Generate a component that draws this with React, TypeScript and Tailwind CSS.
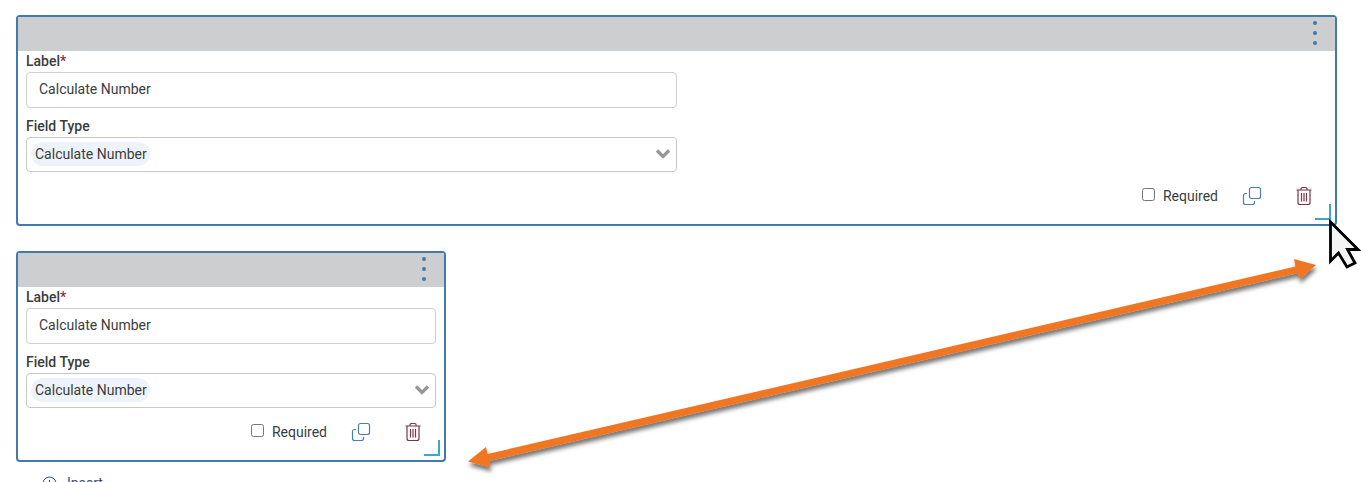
import { useId, useState } from 'react'

function CopyIcon() {
  return (
    <svg width="20" height="20" viewBox="0 0 20 20" fill="none" stroke="#4a80ad" strokeWidth="1.2" aria-hidden="true">
      <rect x="7.5" y="1.5" width="11" height="11" rx="2" />
      <path d="M5 7.500H3.500a2 2 0 0 0-2 2v7a2 2 0 0 0 2 2h7a2 2 0 0 0 2-2V15" />
    </svg>
  )
}

function TrashIcon() {
  return (
    <svg width="18" height="20" viewBox="0 0 18 20" fill="none" stroke="#7a3548" strokeWidth="1.2" aria-hidden="true">
      <path d="M1.500 4h15M6 4V2.800A1.300 1.300 0 0 1 7.300 1.500h3.400A1.300 1.300 0 0 1 12 2.800V4" />
      <path d="M3 4v12.500a2 2 0 0 0 2 2h8a2 2 0 0 0 2-2V4M6.500 7v8.500M9 7v8.500M11.500 7v8.500" />
    </svg>
  )
}

function FieldCard({ className, fieldClassName }: { className: string; fieldClassName: string }) {
  const id = useId()
  const [label, setLabel] = useState('Calculate Number')
  const [required, setRequired] = useState(false)

  return (
    <section className={`relative rounded border-2 border-[#427aab] bg-white ${className}`}>
      <header className="flex h-[34px] items-center justify-end bg-[#cdced0] pr-3 pb-0.5">
        <button type="button" aria-label="Field options" className="flex w-4 flex-col items-center gap-1.5">
          <span className="size-1 rounded-full bg-[#3f79ae]" />
          <span className="size-1 rounded-full bg-[#3f79ae]" />
          <span className="size-1 rounded-full bg-[#3f79ae]" />
        </button>
      </header>

      <div className="px-2">
        <div className={fieldClassName}>
          <label htmlFor={`${id}-label`} className="block h-[21px] leading-5 font-medium">
            Label<span className="text-[#8c2f45]">*</span>
          </label>
          <input
            id={`${id}-label`}
            type="text"
            value={label}
            onChange={(e) => setLabel(e.target.value)}
            className="block h-9 w-full rounded border border-[#cfcfcf] px-3 pb-0.5 outline-none focus:border-[#427aab]"
          />

          <label htmlFor={`${id}-type`} className="mt-2 block h-[21px] leading-5 font-medium">
            Field Type
          </label>
          <div className="relative">
            <span className="absolute top-[5px] left-[5px] h-6 w-[119px] rounded-full bg-[#eef3f9]" />
            <select
              id={`${id}-type`}
              className="relative block h-[35px] w-full appearance-none rounded border border-[#c8c8c8] bg-transparent px-2 pb-0.5 outline-none focus:border-[#427aab]"
            >
              <option>Calculate Number</option>
            </select>
            <svg
              width="16"
              height="12"
              viewBox="0 0 16 12"
              fill="none"
              stroke="#969696"
              strokeWidth="3.2"
              aria-hidden="true"
              className="pointer-events-none absolute top-[11px] right-1.5"
            >
              <path d="M2 2.500 8 8.500l6-6" />
            </svg>
          </div>
        </div>

        <div className="flex h-[52px] items-center justify-end pr-3.5 pb-1">
          <label className="flex items-center gap-2">
            <input
              type="checkbox"
              checked={required}
              onChange={(e) => setRequired(e.target.checked)}
              className="mb-1 size-[13px]"
            />
            Required
          </label>
          <button type="button" aria-label="Duplicate field" className="ml-6">
            <CopyIcon />
          </button>
          <button type="button" aria-label="Delete field" className="ml-[33px]">
            <TrashIcon />
          </button>
        </div>
      </div>

      <span className="absolute right-1 bottom-1 size-4 cursor-se-resize border-r-2 border-b-2 border-[#3ba9c4]" />
    </section>
  )
}

// Arrow and pointer drawn over the form canvas
function ResizeHint() {
  return (
    <svg
      width="1361"
      height="482"
      viewBox="0 0 1361 482"
      aria-hidden="true"
      className="pointer-events-none absolute top-0 left-0"
    >
      <defs>
        <filter id="arrow-shadow" x="-5%" y="-10%" width="110%" height="125%">
          <feDropShadow dx="1" dy="4" stdDeviation="2" floodColor="#000" floodOpacity="0.55" />
        </filter>
      </defs>
      <path
        d="M468 461.500 486 447l1.500 7L1295.500 266.500 1294 259l22 6-16 14-2-6L489 461l1.500 6.500Z"
        fill="#f07623"
        filter="url(#arrow-shadow)"
      />
      <path
        d="M1330.500 222v39l8-8 8.500 14 8-4-7.500-13.500h10.500Z"
        fill="#f4f4f5"
        stroke="#000"
        strokeWidth="2.800"
      />
    </svg>
  )
}

export default function App() {
  return (
    <main className="relative h-screen overflow-hidden bg-white pt-[15px] pr-6 pl-4 font-[Roboto,sans-serif] text-sm text-[#3a3c3f]">
      <FieldCard className="w-full" fieldClassName="w-1/2" />
      <FieldCard className="mt-[25px] w-[430px]" fieldClassName="w-full" />
      <button type="button" className="mt-[11px] ml-[26px] flex items-center gap-2.5 text-[#2f4f7f]">
        <svg width="15" height="15" viewBox="0 0 15 15" fill="none" stroke="currentColor" aria-hidden="true">
          <circle cx="7.500" cy="7.500" r="6.500" />
          <path d="M7.500 4v7M4 7.500h7" />
        </svg>
        Insert
      </button>
      <ResizeHint />
    </main>
  )
}
